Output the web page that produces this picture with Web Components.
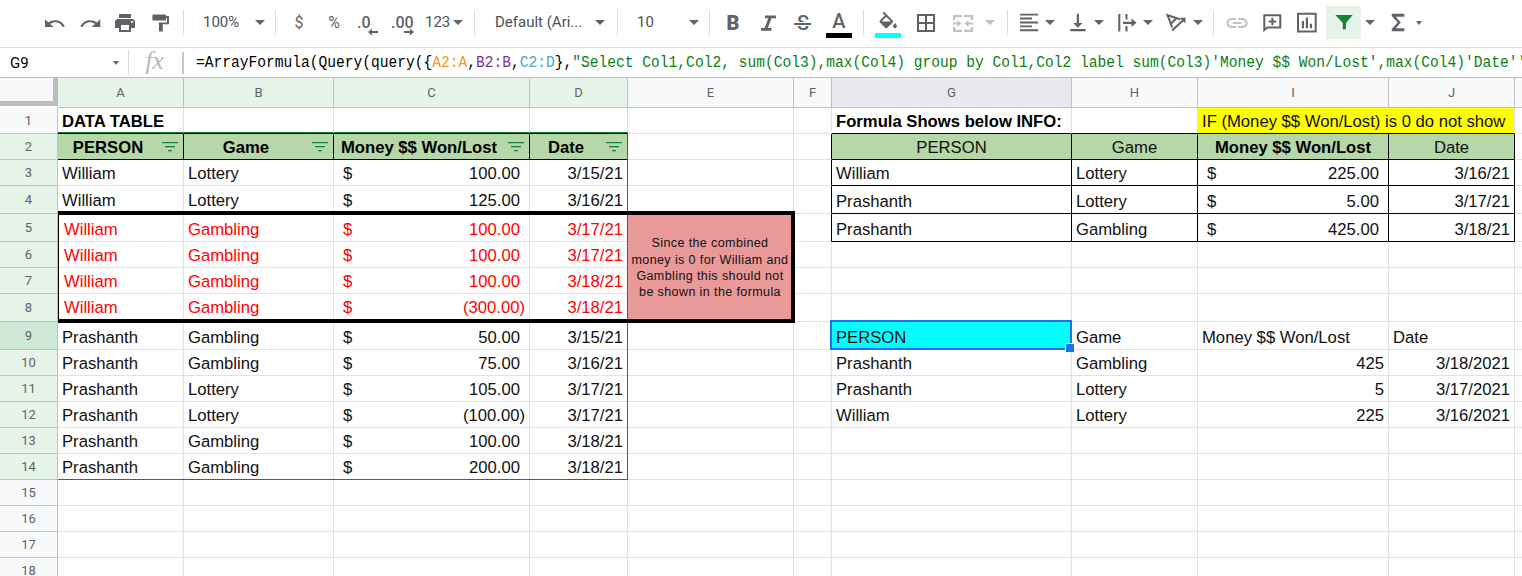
<!DOCTYPE html>
<html lang="en">
<head>
<meta charset="utf-8">
<title>Sheet</title>
<style>
  html, body {
    margin: 0;
    height: 100%;
    overflow: hidden;
    background: #fff;
  }
</style>
</head>
<body>
<sheet-app></sheet-app>

<script>
const ICONS = {
  undo: '<path transform="translate(0 2.3) scale(.97 .86)" d="M12.5 8c-2.65 0-5.05.99-6.9 2.6L2 7v9h9l-3.62-3.62c1.39-1.16 3.16-1.88 5.12-1.88 3.54 0 6.55 2.31 7.6 5.5l2.37-.78C21.08 11.03 17.15 8 12.5 8z"/>',
  redo: '<path transform="translate(24.2 2.3) scale(-.97 .86)" d="M12.5 8c-2.65 0-5.05.99-6.9 2.6L2 7v9h9l-3.62-3.62c1.39-1.16 3.16-1.88 5.12-1.88 3.54 0 6.55 2.31 7.6 5.5l2.37-.78C21.08 11.03 17.15 8 12.5 8z"/>',
  print: '<path d="M19 8H5c-1.66 0-3 1.34-3 3v6h4v4h12v-4h4v-6c0-1.66-1.34-3-3-3zm-3 11H8v-5h8v5zm3-7c-.55 0-1-.45-1-1s.45-1 1-1 1 .45 1 1-.45 1-1 1zm-1-9H6v4h12V3z"/>',
  paint: '<path d="M4.300 3.500h11.800q.900 0 .900.900V5H20v8.300h-6.200V20.500h-3.800V11.500h8V7H17v1.600q0 .900-.900.900H4.300q-.900 0-.900-.900V4.400q0-.900.900-.900z"/>',
  italic: '<path d="M9 4.500v2.800h3.300l-3.700 9.600H5v2.800h10.500v-2.800h-3.700l3.700-9.600H20V4.500z"/>',
  fill: '<path transform="translate(.6 .8) scale(.97)" d="M16.56 8.94L7.62 0 6.21 1.41l2.38 2.38-5.15 5.15c-.59.59-.59 1.54 0 2.12l5.5 5.5c.29.29.68.44 1.06.44s.77-.15 1.06-.44l5.5-5.5c.59-.58.59-1.53 0-2.12zM5.21 10L10 5.21 14.79 10H5.21zM19 11.5s-2 2.17-2 3.5c0 1.1.9 2 2 2s2-.9 2-2c0-1.33-2-3.5-2-3.5z"/>',
  borders: '<path d="M3 3v18h18V3H3zm8 16H5v-6h6v6zm0-8H5V5h6v6zm8 8h-6v-6h6v6zm0-8h-6V5h6v6z"/>',
  merge: '<path d="M2 4h9v2.200H4.200V9H2zM13 4h9v5h-2.200V6.200H13zM2 16h2.200v2.800H11V21H2zM19.800 16H22v5h-9v-2.200h6.800zM2 11.500h4.500V9l3.800 3.500L6.500 16v-2.500H2zM22 11.500h-4.500V9l-3.800 3.500 3.800 3.500v-2.500H22z"/>',
  align: '<path d="M15 15H3v2h12v-2zm0-8H3v2h12V7zM3 13h18v-2H3v2zm0 8h18v-2H3v2zM3 3v2h18V3H3z" transform="translate(0 -.3) scale(1 .98)"/>',
  valign: '<path d="M16.500 12H13V2.800h-2.200V12H7.300l4.600 4.700zM4.300 18v2.300h15.400V18z"/>',
  wrap: '<path d="M3.300 3h2v17.500h-2zM10.500 3h2v5.500h-2zM10.500 15h2v5.500h-2zM8 10.700h8.500V7.500l5 4.300-5 4.300v-3.200H8z"/>',
  rotate: '<path fill="none" stroke="currentColor" stroke-width="2" d="M16 8.300L3.500 4.200l4.700 12.300M12.300 7.200l-5.500 5.500M8 19.500L19.500 9"/><path d="M21.500 6.500v6l-5.800-5.600z"/>',
  link: '<path d="M3.900 12c0-1.710 1.390-3.100 3.100-3.100h4V7H7c-2.760 0-5 2.240-5 5s2.240 5 5 5h4v-1.900H7c-1.710 0-3.100-1.390-3.100-3.100zM8 13h8v-2H8v2zm9-6h-4v1.900h4c1.710 0 3.100 1.390 3.100 3.100s-1.390 3.100-3.100 3.100h-4V17h4c2.760 0 5-2.240 5-5s-2.240-5-5-5z" transform="translate(-.6 0) scale(1.060 1)"/>',
  comment: '<path fill="none" stroke="currentColor" stroke-width="2" d="M4.300 4.300h16v12.200H7.500l-3.200 2.500z"/><path d="M11.400 6.800h2v2.700h2.800v2h-2.800v2.700h-2v-2.700H8.600v-2h2.800z"/>',
  chart: '<path fill="none" stroke="currentColor" stroke-width="2" d="M3 2.700h17.700v17.700H3z"/><path d="M6.800 10h2.200v7.200H6.800zM10.800 6.500H13v10.700h-2.200zM14.800 12.700H17v4.500h-2.200z"/>',
  filter: '<path d="M3.300 4h17.400L14 12v6.300h-3.200V12z"/>',
  sigma: '<path d="M4.700 2.700h12.600v3H8.800l5 5.700-5 5.800h8.500v3H4.700v-2.200l6-6.600-6-6.500z"/>'
};

class ToolIcon extends HTMLElement {
  connectedCallback() {
    const root = this.attachShadow({ mode: 'open' });
    root.innerHTML = `
      <style>
        :host { display: flex; align-items: center; justify-content: center; position: relative; width: 24px; height: 24px; flex: none; color: #5f6368; }
        :host([muted]) { color: #bdc1c6; }
        :host([bar]) { width: 26px; }
        :host([active]) { width: 35px; height: 33px; background: #e6f4ea; color: #188038; }
        svg { display: block; width: 24px; height: 24px; fill: currentColor; }
        .bar { position: absolute; left: 0; right: 0; top: 22px; height: 5px; }
      </style>
      <svg viewBox="0 0 24 24">${ICONS[this.getAttribute('name')] || ''}</svg>`;
    if (this.hasAttribute('bar')) {
      root.innerHTML += `<div class="bar" style="background:${this.getAttribute('bar')}"></div>`;
    }
  }
}
customElements.define('tool-icon', ToolIcon);

// Letter shaped buttons: B, S, A, $, %, .0, .00
class ToolLetter extends HTMLElement {
  connectedCallback() {
    const root = this.attachShadow({ mode: 'open' });
    const arrow = this.getAttribute('arrow');
    root.innerHTML = `
      <style>
        :host { display: flex; align-items: center; justify-content: center; position: relative; width: 24px; height: 24px; flex: none; color: #5f6368; font: 500 20px/24px Roboto, sans-serif; }
        :host([kind="small"]) { font-size: 16px; font-weight: 400; }
        :host([kind="decimal"]) { font-size: 16px; font-weight: 500; justify-content: flex-start; }
        :host([kind="bold"]) { font-weight: 900; }
        :host([bar]) { width: 26px; }
        .bar { position: absolute; left: 0; right: 0; top: 22px; height: 5px; background: #000; }
        .strike { position: absolute; left: 3px; right: 4px; top: 12px; height: 2px; background: currentColor; box-shadow: 0 -1px #fff, 0 1px #fff; }
        .arrow { position: absolute; top: 17px; width: 10px; height: 8px; fill: currentColor; }
        .left { right: 1px; }
        .right { right: 1px; transform: scaleX(-1); }
        ::slotted(*), slot { position: relative; }
      </style>
      <slot></slot>
      ${this.hasAttribute('bar') ? '<div class="bar"></div>' : ''}
      ${this.hasAttribute('strike') ? '<div class="strike"></div>' : ''}
      ${arrow ? `<svg class="arrow ${arrow}" viewBox="0 0 10 8"><path d="M0 4l4-3.500V3h6v2H4v2.500z"/></svg>` : ''}`;
  }
}
customElements.define('tool-letter', ToolLetter);

class DropArrow extends HTMLElement {
  connectedCallback() {
    this.attachShadow({ mode: 'open' }).innerHTML = `
      <style>
        :host { display: block; flex: none; width: 0; height: 0; border: 5px solid transparent; border-top-color: #5f6368; border-bottom: 0; }
        :host([muted]) { border-top-color: #bdc1c6; }
        :host([small]) { border-width: 4px 3.500px 0; }
      </style>`;
  }
}
customElements.define('drop-arrow', DropArrow);

class ToolSelect extends HTMLElement {
  connectedCallback() {
    this.attachShadow({ mode: 'open' }).innerHTML = `
      <style>
        :host { display: flex; align-items: center; justify-content: space-between; flex: none; color: #4d5156; font: 400 15px/24px Roboto, sans-serif; white-space: nowrap; }
        span { position: relative; top: -1px; }
      </style>
      <span><slot></slot></span><drop-arrow></drop-arrow>`;
  }
}
customElements.define('tool-select', ToolSelect);

class SheetToolbar extends HTMLElement {
  connectedCallback() {
    this.attachShadow({ mode: 'open' }).innerHTML = `
      <style>
        :host { display: flex; align-items: center; box-sizing: border-box; height: 48px; padding: 0 0 2px 43px; border-bottom: 1px solid #dadce0; }
        :host > * { margin-left: 11px; }
        :host > :nth-child(2) { margin-left: 0; }
        i { width: 1px; height: 25px; background: #dadce0; flex: none; }
        :host > drop-arrow { margin-left: 4px; }
      </style>
      <tool-icon name="undo"></tool-icon>
      <tool-icon name="redo"></tool-icon>
      <tool-icon name="print"></tool-icon>
      <tool-icon name="paint" style="margin-left:12px"></tool-icon>
      <i style="margin-left:10px"></i>
      <tool-select style="margin-left:19px;width:62px">100%</tool-select>
      <i style="margin-left:10px"></i>
      <tool-letter kind="small" style="margin-left:11px">$</tool-letter>
      <tool-letter kind="small">%</tool-letter>
      <tool-letter kind="decimal" arrow="left" style="width:22px">.0</tool-letter>
      <tool-letter kind="decimal" arrow="right" style="margin-left:12px;width:24px">.00</tool-letter>
      <tool-select style="margin-left:10px;width:38px">123</tool-select>
      <i></i>
      <tool-select style="margin-left:20px;width:110px">Default (Ari...</tool-select>
      <i style="margin-left:12px"></i>
      <tool-select style="margin-left:19px;width:62px">10</tool-select>
      <i style="margin-left:10px"></i>
      <tool-letter kind="bold">B</tool-letter>
      <tool-icon name="italic"></tool-icon>
      <tool-letter strike>S</tool-letter>
      <tool-letter bar><span style="top:-2px">A</span></tool-letter>
      <i></i>
      <tool-icon name="fill" bar="#00ffff"></tool-icon>
      <tool-icon name="borders" style="margin-left:13px"></tool-icon>
      <tool-icon name="merge" muted style="margin-left:13px"></tool-icon>
      <drop-arrow muted style="margin-left:10px"></drop-arrow>
      <i style="margin-left:12px"></i>
      <tool-icon name="align" style="margin-left:9px"></tool-icon>
      <drop-arrow></drop-arrow>
      <tool-icon name="valign"></tool-icon>
      <drop-arrow></drop-arrow>
      <tool-icon name="wrap"></tool-icon>
      <drop-arrow></drop-arrow>
      <tool-icon name="rotate"></tool-icon>
      <drop-arrow style="margin-left:5px"></drop-arrow>
      <i style="margin-left:10px"></i>
      <tool-icon name="link" muted></tool-icon>
      <tool-icon name="comment"></tool-icon>
      <tool-icon name="chart"></tool-icon>
      <tool-icon name="filter" active style="margin-left:7px"></tool-icon>
      <drop-arrow></drop-arrow>
      <tool-icon name="sigma" style="margin-left:12px"></tool-icon>
      <drop-arrow small style="margin-left:5px"></drop-arrow>`;
  }
}
customElements.define('sheet-toolbar', SheetToolbar);

class FormulaBar extends HTMLElement {
  connectedCallback() {
    this.attachShadow({ mode: 'open' }).innerHTML = `
      <style>
        :host { display: flex; align-items: center; box-sizing: border-box; height: 30px; border-bottom: 1px solid #c0c0c0; color: #000; overflow: hidden; }
        .name { flex: none; display: flex; align-items: center; justify-content: space-between; box-sizing: border-box; width: 129px; height: 25px; padding: 0 9px 0 10px; border-right: 1px solid #dadce0; font: 15px Roboto, sans-serif; }
        .fx { flex: none; width: 53px; text-align: center; font: italic 25px/24px "Liberation Serif", serif; color: #b4b7ba; }
        .fx span { position: relative; top: -2px; left: -1px; }
        .formula { flex: none; box-sizing: border-box; height: 22px; border-left: 2px solid #c6c6c6; padding-left: 12px; font: 16px/22px "Liberation Mono", monospace; white-space: pre; }
        .formula div { transform: scaleX(.9115); transform-origin: 0 0; }
        .a { color: #f7981d; }
        .b { color: #7e3794; }
        .c { color: #45a9cf; }
        .s { color: #0b8012; }
      </style>
      <div class="name">G9<drop-arrow small></drop-arrow></div>
      <div class="fx"><span>fx</span></div>
      <div class="formula"><div>=ArrayFormula(Query(query({<span class="a">A2:A</span>,<span class="b">B2:B</span>,<span class="c">C2:D</span>},<span class="s">"Select Col1,Col2, sum(Col3),max(Col4) group by Col1,Col2 label sum(Col3)'Money $$ Won/Lost',max(Col4)'Date''</span></div></div>`;
  }
}
customElements.define('formula-bar', FormulaBar);

class SheetCell extends HTMLElement {
  connectedCallback() {
    const root = this.attachShadow({ mode: 'open' });
    root.innerHTML = `
      <style>
        :host { display: flex; align-items: flex-end; box-sizing: border-box; min-width: 0; min-height: 0; padding: 0 4px 2px; border: solid #e2e2e2; border-width: 0 1px 1px 0; background: #fff; color: #111; font: 16.670px/19px "Liberation Sans", Arial, sans-serif; white-space: nowrap; }
        :host([bold]) { font-weight: 700; color: #000; }
        :host([red]) { color: #f00; }
        :host([align="right"]) { justify-content: flex-end; }
        :host([align="center"]) { justify-content: center; }
        :host([align="money"]) { justify-content: space-between; padding-left: 9px; padding-right: 9px; }
        :host([paren]) { padding-right: 4px !important; }
        :host([fill="green"]) { background: #b6d7a8; }
        :host([fill="yellow"]) { background: #ff0; }
        :host([fill="cyan"]) { background: #0ff; }
        :host([dark~="r"]) { border-right-color: #000; }
        :host([dark~="b"]) { border-bottom-color: #000; }
        :host([lift]) { padding-bottom: 3px; }
        :host([lift="2"]) { padding-bottom: 4px; }
        :host([indent]) { padding-left: 6px; }
        :host([filter]) { padding: 0 5px 2px 0; justify-content: flex-end; }
        :host([filter]) .text { flex: 1; text-align: center; }
        :host([note]) { align-items: center; justify-content: center; text-align: center; padding: 1px 2px 0 1px; background: #ea9999; font-size: 12.500px; line-height: 16.400px; letter-spacing: .4px; white-space: pre; }
        svg { flex: none; width: 16px; height: 10px; margin: 0 0 5px 4px; fill: #188038; }
      </style>
      <span class="text"><slot></slot></span>`;
    if (this.hasAttribute('filter')) {
      root.innerHTML += '<svg viewBox="0 0 16 10"><path d="M0 0h16v1.300H0zM3 4h10v1.300H3zM6 8h4v1.300H6z"/></svg>';
    }
    if (this.getAttribute('align') === 'money') {
      root.querySelector('.text').insertAdjacentHTML('beforebegin', '<span>$</span>');
    }
  }
}
customElements.define('sheet-cell', SheetCell);

const COLUMNS = 'ABCDEFGHIJK';
const ROW_COUNT = 18;

// [person, game, amount, date] for rows 3 to 14
const ENTRIES = [
  ['William', 'Lottery', '100.00', '3/15/21'],
  ['William', 'Lottery', '125.00', '3/16/21'],
  ['William', 'Gambling', '100.00', '3/17/21'],
  ['William', 'Gambling', '100.00', '3/17/21'],
  ['William', 'Gambling', '100.00', '3/18/21'],
  ['William', 'Gambling', '(300.00)', '3/18/21'],
  ['Prashanth', 'Gambling', '50.00', '3/15/21'],
  ['Prashanth', 'Gambling', '75.00', '3/16/21'],
  ['Prashanth', 'Lottery', '105.00', '3/17/21'],
  ['Prashanth', 'Lottery', '(100.00)', '3/17/21'],
  ['Prashanth', 'Gambling', '100.00', '3/18/21'],
  ['Prashanth', 'Gambling', '200.00', '3/18/21']
];
const EXPECTED = [
  ['William', 'Lottery', '225.00', '3/16/21'],
  ['Prashanth', 'Lottery', '5.00', '3/17/21'],
  ['Prashanth', 'Gambling', '425.00', '3/18/21']
];
const RESULT = [
  ['Prashanth', 'Gambling', '425', '3/18/2021'],
  ['Prashanth', 'Lottery', '5', '3/17/2021'],
  ['William', 'Lottery', '225', '3/16/2021']
];

function buildCells() {
  const cells = {};
  const put = (ref, text, attrs = '') => { cells[ref] = { text, attrs }; };

  put('A1', 'DATA TABLE', 'bold dark="b"');
  ['B1', 'C1', 'D1', 'H1'].forEach(ref => put(ref, '', 'dark="b"'));
  put('G1', 'Formula Shows below INFO:', 'bold dark="b"');
  put('I1', 'IF (Money $$ Won/Lost) is 0 do not show', 'fill="yellow" dark="b"');

  ['PERSON', 'Game', 'Money $$ Won/Lost', 'Date'].forEach((title, i) => {
    put('ABCD'[i] + 2, title, 'bold filter fill="green" dark="r b"');
    put('GHIJ'[i] + 2, title, `${i === 2 ? 'bold' : ''} align="center" fill="green" dark="r b"`);
    put('GHIJ'[i] + 9, title, i === 0 ? 'fill="cyan"' : '');
  });

  ENTRIES.forEach(([person, game, amount, date], i) => {
    const row = i + 3;
    let extra = row >= 5 && row <= 8 ? 'red ' : '';
    // rows above a thick border sit a little higher
    if (row === 4) extra += 'lift ';
    if (row === 8) extra += 'lift="2" ';
    put('A' + row, person, extra + (extra.includes('red') ? 'indent' : ''));
    put('B' + row, game, extra);
    put('C' + row, amount, extra + 'align="money"' + (amount[0] === '(' ? ' paren' : ''));
    put('D' + row, date, extra + 'align="right"');
  });

  EXPECTED.forEach(([person, game, amount, date], i) => {
    const row = i + 3;
    put('G' + row, person, 'dark="r b"');
    put('H' + row, game, 'dark="r b"');
    put('I' + row, amount, 'align="money" dark="r b"');
    put('J' + row, date, 'align="right" dark="r b"');
  });
  for (let row = 2; row <= 5; row++) put('F' + row, '', 'dark="r"');

  RESULT.forEach(([person, game, amount, date], i) => {
    const row = i + 10;
    put('G' + row, person);
    put('H' + row, game);
    put('I' + row, amount, 'align="right"');
    put('J' + row, date, 'align="right"');
  });

  put('E5', 'Since the combined\nmoney is 0 for William and\nGambling this should not\nbe shown in the formula', 'note');
  return cells;
}

class SheetGrid extends HTMLElement {
  connectedCallback() {
    const cells = buildCells();
    const merged = { I1: 'span 1 / span 2', E5: 'span 4 / span 1' };
    const hidden = ['J1', 'E6', 'E7', 'E8'];

    let html = '<div class="corner"></div>';
    [...COLUMNS].forEach((col, i) => {
      const state = i < 4 ? 'on' : col === 'G' ? 'current' : '';
      html += `<div class="head col ${state}" style="grid-area:1/${i + 2}">${col === 'K' ? '' : col}</div>`;
    });
    for (let row = 1; row <= ROW_COUNT; row++) {
      const state = row === 9 ? 'strong' : row > 1 && row < 15 ? 'on' : '';
      html += `<div class="head row ${state}" style="grid-area:${row + 1}/1">${row}</div>`;
      [...COLUMNS].forEach((col, i) => {
        const ref = col + row;
        if (hidden.includes(ref)) return;
        const cell = cells[ref] || { text: '', attrs: '' };
        const [rs, cs] = (merged[ref] || 'span 1 / span 1').split(' / ');
        html += `<sheet-cell ${cell.attrs} style="grid-area:${row + 1}/${i + 2}/${rs}/${cs}">${cell.text}</sheet-cell>`;
      });
    }

    this.attachShadow({ mode: 'open' }).innerHTML = `
      <style>
        :host { display: grid; grid-template-columns: 58px 126px 150px 196px 98px 166px 38px 240px 126px 191px 126px 100px; grid-template-rows: 30px 26px 26px 26px 28px 28px 26px 26px 28px 28px; grid-auto-rows: 26px; }
        .corner { box-sizing: border-box; height: 28px; grid-area: 1 / 1; background: #f8f9fa; border: solid #bdbdbd; border-width: 0 5px 5px 0; }
        .head { display: flex; align-items: center; justify-content: center; box-sizing: border-box; background: #f8f9fa; border: solid #c0c0c0; border-width: 0 1px 1px 0; color: #5f6368; font: 13px Roboto, sans-serif; }
        .row { padding-bottom: 1px; }
        .on { background: #e6f4ea; }
        .strong { background: #ceead6; }
        .current { background: #e8eaed; }
        .filter-range { grid-area: 3 / 2 / 16 / 6; margin-top: -2px; border: solid #188038; border-width: 1px 1px 1px 0; z-index: 1; }
        .zero-sum { grid-area: 6 / 2 / 10 / 7; margin: -3px -1px -1px 0; border: 4px solid #000; border-left-width: 1px; z-index: 2; }
        .selection { position: relative; grid-area: 10 / 8; margin: -2px 0 0 -2px; border: 2px solid #1a73e8; z-index: 3; }
        .selection::after { content: ''; position: absolute; right: -4px; bottom: -4px; width: 8px; height: 8px; background: #1a73e8; border: solid #fff; border-width: 1px 0 0 1px; }
      </style>
      ${html}
      <div class="filter-range"></div>
      <div class="zero-sum"></div>
      <div class="selection"></div>`;
  }
}
customElements.define('sheet-grid', SheetGrid);

class SheetApp extends HTMLElement {
  connectedCallback() {
    this.attachShadow({ mode: 'open' }).innerHTML = `
      <style>
        :host { display: flex; flex-direction: column; width: 100%; height: 100vh; overflow: hidden; }
        sheet-toolbar, formula-bar { flex: none; }
      </style>
      <sheet-toolbar></sheet-toolbar>
      <formula-bar></formula-bar>
      <sheet-grid></sheet-grid>`;
  }
}
customElements.define('sheet-app', SheetApp);
</script>
</body>
</html>
